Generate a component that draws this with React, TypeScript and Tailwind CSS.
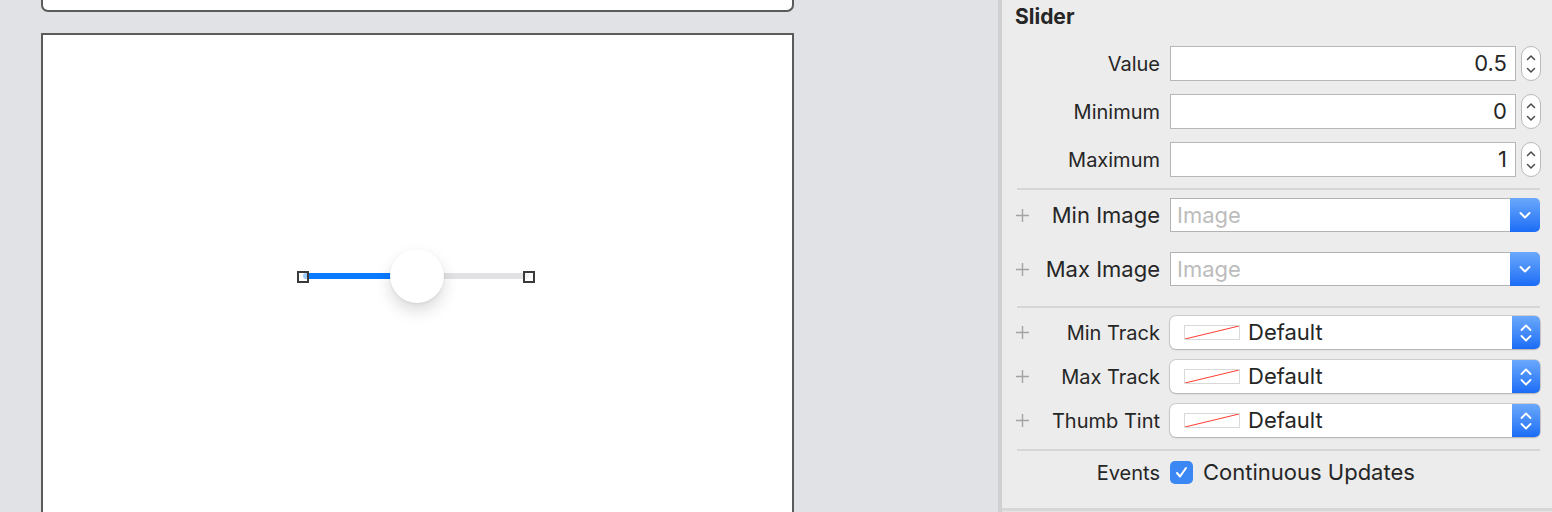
import React from 'react';

const Plus = () => (
  <svg width="15" height="15" viewBox="0 0 15 15" className="shrink-0">
    <path d="M7.5 1v13M1 7.5h13" stroke="#a3a3a3" strokeWidth="1.4" fill="none" />
  </svg>
);

const Stepper = () => (
  <div className="ml-[5px] flex h-[35px] w-[20px] flex-col items-center justify-center rounded-full border border-[#b9b9b9] bg-white">
    <svg width="12" height="26" viewBox="0 0 12 26">
      <path d="M2.5 8.5 6 5l3.5 3.5M2.5 17.5 6 21l3.5-3.5" stroke="#4a4a4a" strokeWidth="1.5" fill="none" strokeLinecap="round" strokeLinejoin="round" />
    </svg>
  </div>
);

const NumberRow = ({ label, value, first }: { label: string; value: string; first?: boolean }) => (
  <div className={`flex h-[35px] items-center ${first ? 'mt-[17px]' : 'mt-[13px]'}`}>
    <div className="w-[145px] text-right text-[20px]">{label}</div>
    <div className="ml-[10px] flex h-[35px] w-[346px] items-center justify-end border border-[#b7b7b7] bg-white pr-[8px] text-[22px]">
      {value}
    </div>
    <Stepper />
  </div>
);

const BlueButton = ({ double, w }: { double?: boolean; w: string }) => (
  <div className={`flex h-full ${w} items-center justify-center rounded-r-[5px] bg-gradient-to-b from-[#6aa8fb] to-[#1a6cf6]`}>
    {double ? (
      <svg width="14" height="24" viewBox="0 0 14 24">
        <path d="M2.5 9 7 4.5 11.5 9M2.5 15 7 19.5 11.5 15" stroke="#fff" strokeWidth="1.8" fill="none" strokeLinecap="round" strokeLinejoin="round" />
      </svg>
    ) : (
      <svg width="14" height="10" viewBox="0 0 14 10">
        <path d="M2.5 3 7 7.5 11.5 3" stroke="#fff" strokeWidth="2" fill="none" strokeLinecap="round" strokeLinejoin="round" />
      </svg>
    )}
  </div>
);

const ImageRow = ({ label, mt }: { label: string; mt: string }) => (
  <div className={`flex h-[34px] items-center ${mt}`}>
    <Plus />
    <div className="w-[130px] text-right text-[22px]">{label}</div>
    <div className="ml-[10px] flex h-[34px] w-[370px]">
      <div className="flex flex-1 items-center border border-r-0 border-[#b3b3b3] bg-white pl-[6px] text-[22px] text-[#bcbcbc]">
        Image
      </div>
      <BlueButton w="w-[30px]" />
    </div>
  </div>
);

const Swatch = () => (
  <div className="ml-[14px] h-[15px] w-[56px] border border-[#d9d9d9] bg-white">
    <svg width="54" height="13" viewBox="0 0 54 13" className="block">
      <path d="M0 13 54 0" stroke="#ff3b30" strokeWidth="1" />
    </svg>
  </div>
);

const ColorRow = ({ label, mt }: { label: string; mt: string }) => (
  <div className={`flex h-[33px] items-center ${mt}`}>
    <Plus />
    <div className="w-[130px] text-right text-[20px]">{label}</div>
    <div className="ml-[10px] flex h-[33px] w-[370px] rounded-[6px] bg-white shadow-[0_0_0_1px_rgba(0,0,0,0.12),0_1px_2px_rgba(0,0,0,0.15)]">
      <div className="flex flex-1 items-center">
        <Swatch />
        <span className="ml-[8px] text-[22px]">Default</span>
      </div>
      <BlueButton double w="w-[28px]" />
    </div>
  </div>
);

const Divider = ({ mt }: { mt: string }) => <div className={`${mt} ml-[2px] h-[2px] w-[523px] bg-[#d6d6d6]`} />;

export default function App() {
  return (
    <div className="flex h-[512px] w-[1552px] overflow-hidden font-['Inter',sans-serif] text-[#262626]">
      {/* canvas */}
      <div className="flex w-[998px] flex-col bg-[#e1e2e5] pl-[41px]">
        <div className="h-[12px] w-[753px] rounded-b-[7px] border-x-2 border-b-2 border-[#5b5b5b] bg-white" />
        <div className="mt-[21px] flex w-[753px] flex-1 justify-center border-2 border-b-0 border-[#5b5b5b] bg-white pt-[214px]">
          <div className="relative mr-[3px] flex h-[54px] w-[238px] items-center px-[6px]">
            <div className="flex h-[6px] w-full overflow-hidden rounded-full">
              <div className="w-[113px] bg-[#0a7aff]" />
              <div className="flex-1 bg-[#e2e2e4]" />
            </div>
            <div className="absolute left-0 top-[22px] h-[12px] w-[12px] border-2 border-[#3a3a3a] bg-white/60" />
            <div className="absolute right-0 top-[22px] h-[12px] w-[12px] border-2 border-[#3a3a3a] bg-white/60" />
            <div className="absolute left-[93px] top-0 h-[54px] w-[54px] rounded-full bg-white shadow-[0_8px_16px_rgba(0,0,0,0.14),0_1px_3px_rgba(0,0,0,0.08)]" />
          </div>
        </div>
      </div>

      <div className="w-[4px] bg-[#cfd0d2]" />

      {/* inspector */}
      <div className="flex w-[550px] flex-col bg-[#ececec]">
        <div className="flex flex-1 flex-col pl-[13px] pr-[11px] pt-[5px]">
          <div className="h-[24px] text-[21px] font-bold leading-[24px]">Slider</div>
          <NumberRow label="Value" value="0.5" first />
          <NumberRow label="Minimum" value="0" />
          <NumberRow label="Maximum" value="1" />
          <Divider mt="mt-[11px]" />
          <ImageRow label="Min Image" mt="mt-[8px]" />
          <ImageRow label="Max Image" mt="mt-[20px]" />
          <Divider mt="mt-[20px]" />
          <ColorRow label="Min Track" mt="mt-[8px]" />
          <ColorRow label="Max Track" mt="mt-[11px]" />
          <ColorRow label="Thumb Tint" mt="mt-[11px]" />
          <Divider mt="mt-[12px]" />
          <div className="mt-[10px] flex h-[23px] items-center">
            <div className="w-[145px] text-right text-[20px]">Events</div>
            <div className="ml-[10px] flex h-[23px] w-[23px] items-center justify-center rounded-[5px] bg-[#3b88f5]">
              <svg width="15" height="15" viewBox="0 0 15 15">
                <path d="M3 8l3 3.5L12 3" stroke="#fff" strokeWidth="2" fill="none" strokeLinecap="round" strokeLinejoin="round" />
              </svg>
            </div>
            <span className="ml-[10px] text-[22px]">Continuous Updates</span>
          </div>
        </div>
        <div className="h-[3px] bg-[#d7d7d7]" />
        <div className="h-[1px] bg-[#e4e4e4]" />
      </div>
    </div>
  );
}
